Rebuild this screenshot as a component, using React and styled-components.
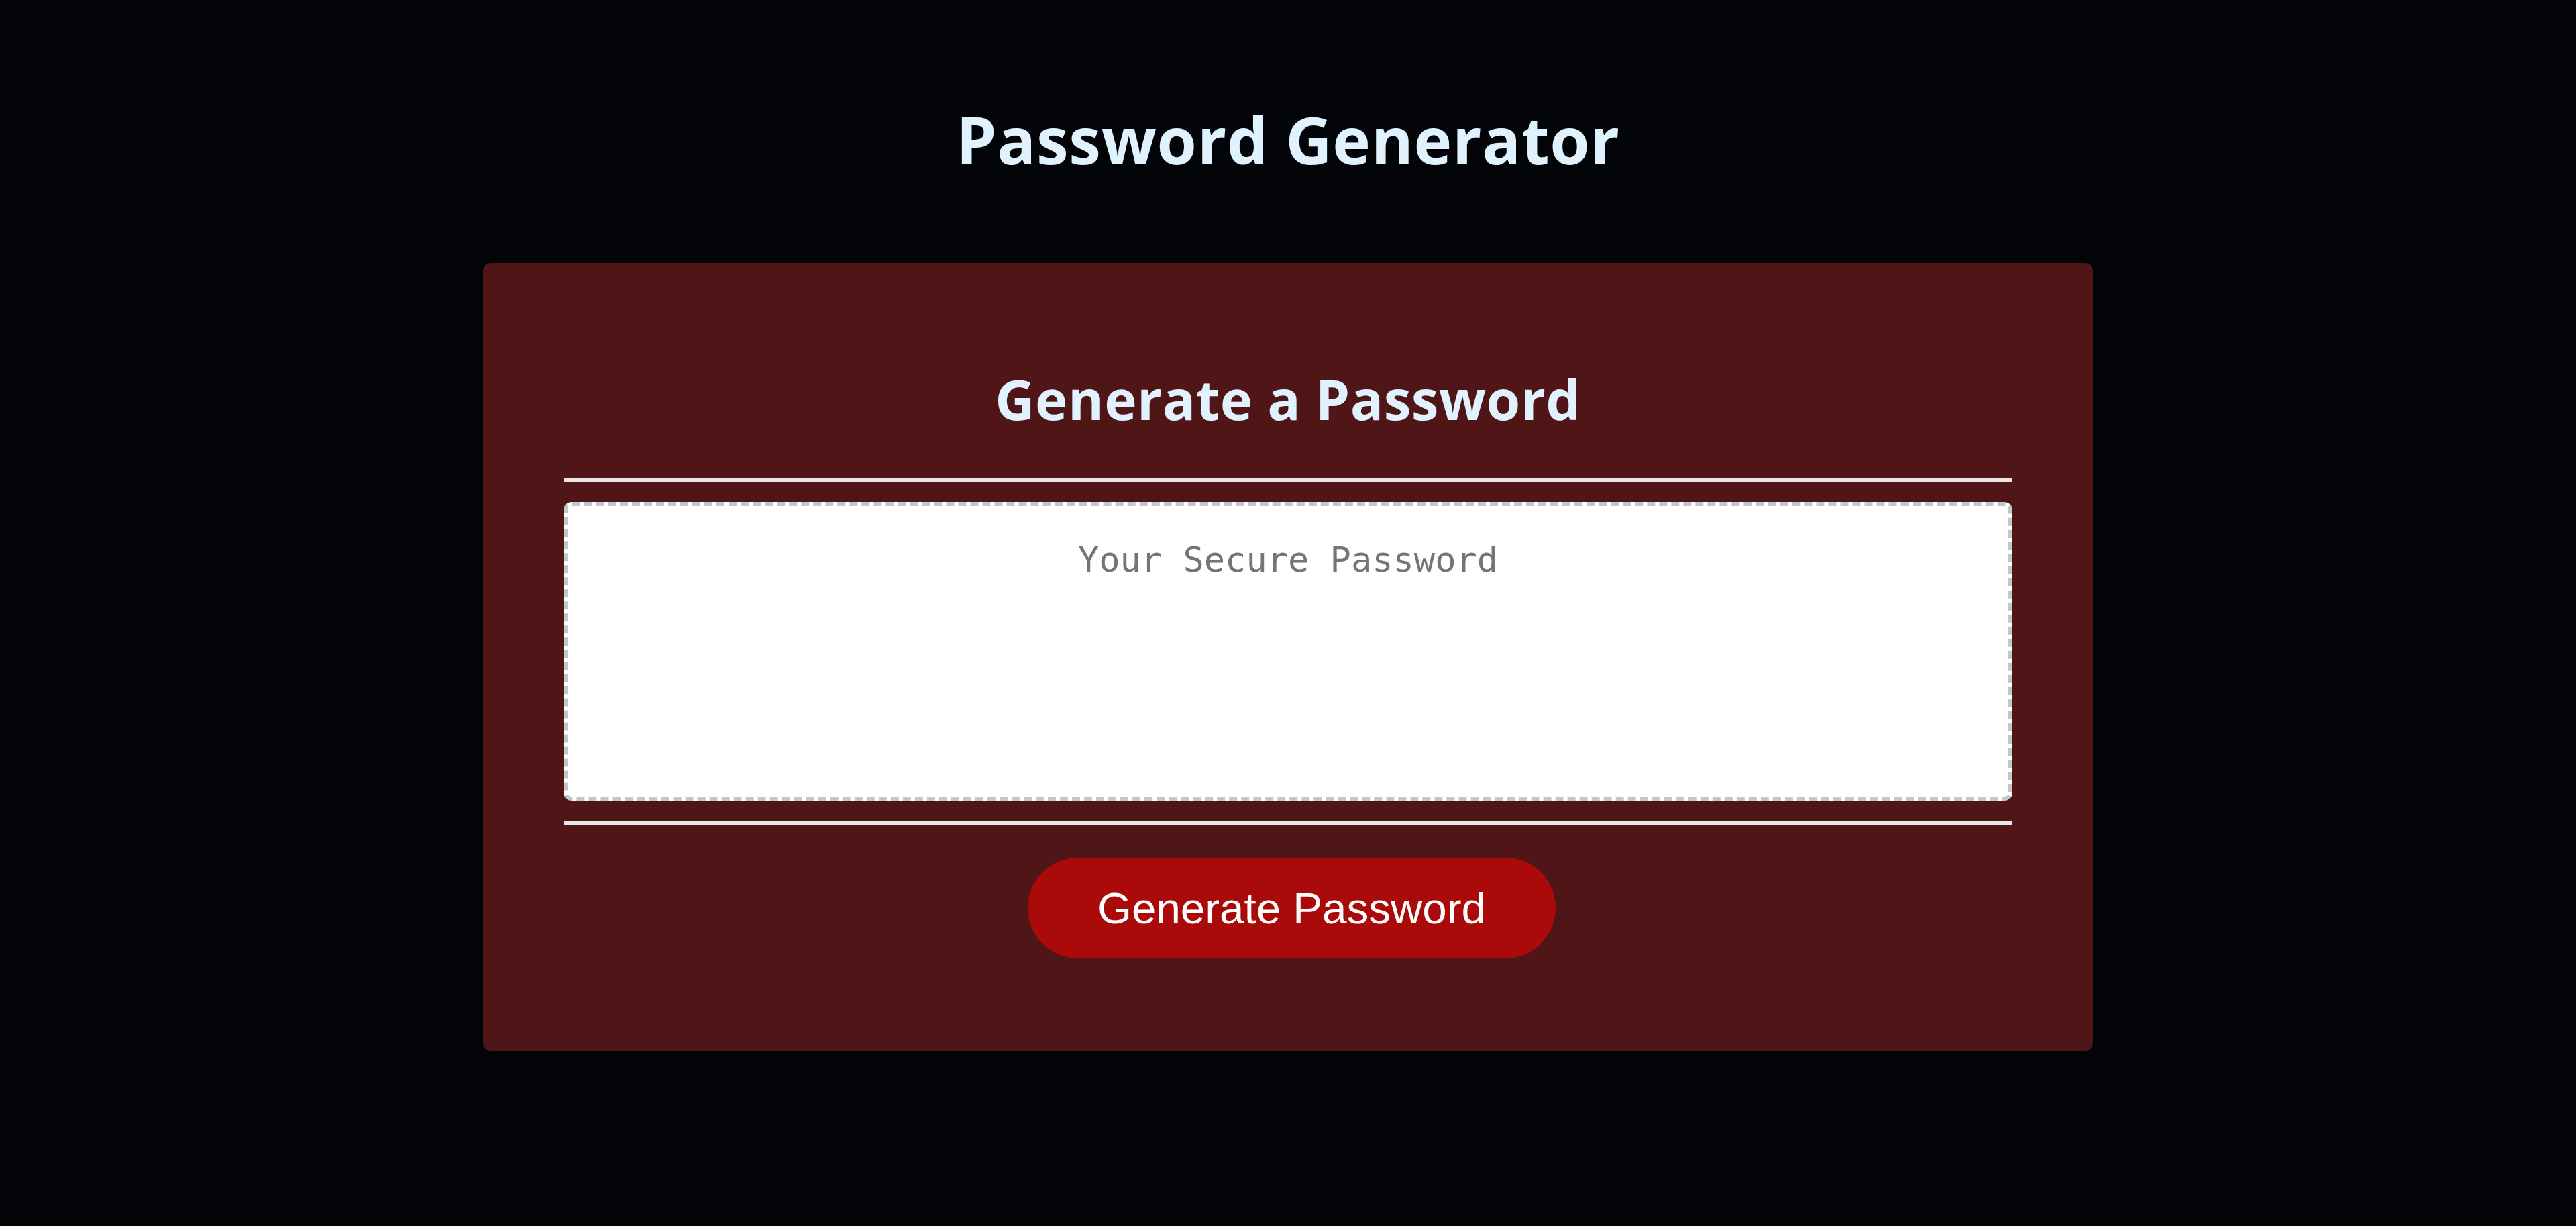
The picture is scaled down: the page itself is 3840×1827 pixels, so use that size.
import React from 'react'
import styled, { createGlobalStyle } from 'styled-components'

const GlobalStyle = createGlobalStyle`
  html, body {
    margin: 0;
    padding: 0;
    background-color: #030407;
  }
  * {
    box-sizing: border-box;
  }
`

function App() {
  return (
    <>
      <GlobalStyle />
      <Page>
        <Title>Password Generator</Title>
        <Card>
          <CardHeader>Generate a Password</CardHeader>
          <Rule />
          <PasswordBox readOnly placeholder="Your Secure Password" aria-label="Generated Password" />
          <Rule />
          <GenerateBtn type="button">Generate Password</GenerateBtn>
        </Card>
      </Page>
    </>
  )
}

export default App

const Page = styled.div`
  min-height: 100vh;
  display: flex;
  flex-direction: column;
  align-items: center;
  padding-top: 160px;
`

const Title = styled.h1`
  margin: 0;
  color: #e0f2fe;
  font-family: "Open Sans", "Noto Sans", sans-serif;
  font-weight: 700;
  font-size: 96px;
  line-height: 96px;
  letter-spacing: 0.7px;
`

const Card = styled.div`
  margin-top: 136px;
  width: 2400px;
  display: flex;
  flex-direction: column;
  align-items: center;
  padding: 161px 120px 138px;
  background-color: #501617;
  border-radius: 12px;
`

const CardHeader = styled.h2`
  margin: 0 0 77px;
  color: #e0f2fe;
  font-family: "Open Sans", "Noto Sans", sans-serif;
  font-weight: 700;
  font-size: 82px;
  line-height: 82px;
  letter-spacing: 0.4px;
`

const Rule = styled.hr`
  width: 100%;
  height: 6px;
  margin: 0;
  border: none;
  background-color: #e8e8e8;
`

const PasswordBox = styled.textarea`
  display: block;
  width: 100%;
  height: 445px;
  margin: 30px 0 31px;
  padding: 50px 20px;
  border: 6px dashed #c1c7ce;
  border-radius: 12px;
  background: #ffffff;
  resize: none;
  text-align: center;
  font-family: "DejaVu Sans Mono", monospace;
  font-size: 52px;
  color: #333;

  &::placeholder {
    color: #757575;
  }
`

const GenerateBtn = styled.button`
  margin: 48px 0 0 11px;
  height: 150px;
  padding: 0 104px;
  border: none;
  border-radius: 75px;
  background-color: #ab0a0a;
  color: #ffffff;
  font-family: "Liberation Sans", Arial, sans-serif;
  font-size: 65.5px;
  cursor: pointer;
`
